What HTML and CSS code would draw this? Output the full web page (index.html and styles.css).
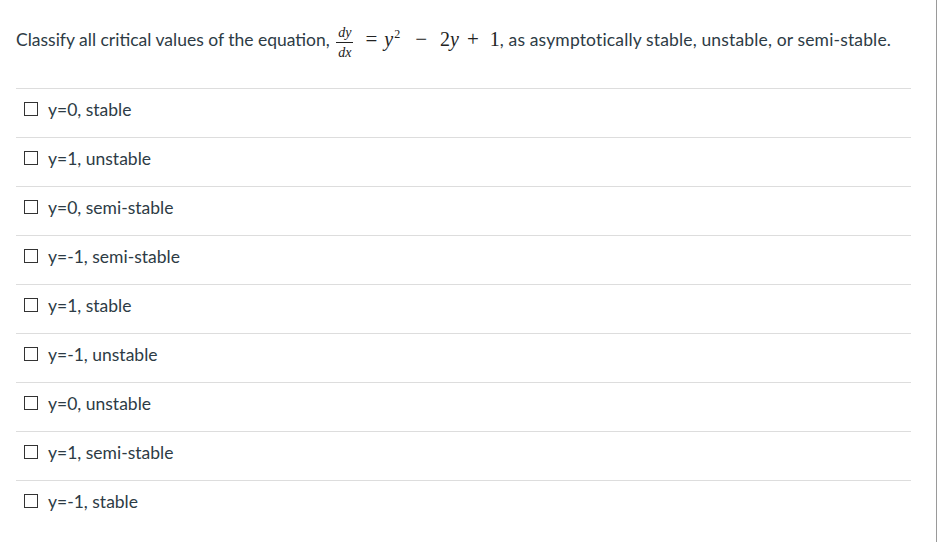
FILE: index.html
```html
<!DOCTYPE html>
<html lang="en">
<head>
  <meta charset="UTF-8" />
  <title>Question</title>
  <link rel="stylesheet" href="styles.css">
</head>
<body>
  <div class="page">
    <div class="question">
      <p class="question-text">Classify all critical values of the equation, <span class="math"><span class="frac"><span class="num">dy</span><span class="den">dx</span></span><span class="op eq">=</span><span class="var">y<sup>2</sup></span><span class="op minus">−</span><span class="num-ital">2<i>y</i></span><span class="op plus">+</span><span class="digit">1</span></span><span class="tail">, as asymptotically stable, unstable, or semi-stable.</span></p>

      <ul class="answers">
        <li class="answer"><span class="box"></span><span class="label">y=0, stable</span></li>
        <li class="answer"><span class="box"></span><span class="label">y=1, unstable</span></li>
        <li class="answer"><span class="box"></span><span class="label">y=0, semi-stable</span></li>
        <li class="answer"><span class="box"></span><span class="label">y=-1, semi-stable</span></li>
        <li class="answer"><span class="box"></span><span class="label">y=1, stable</span></li>
        <li class="answer"><span class="box"></span><span class="label">y=-1, unstable</span></li>
        <li class="answer"><span class="box"></span><span class="label">y=0, unstable</span></li>
        <li class="answer"><span class="box"></span><span class="label">y=1, semi-stable</span></li>
        <li class="answer"><span class="box"></span><span class="label">y=-1, stable</span></li>
      </ul>
    </div>
  </div>
</body>
</html>
```

FILE: styles.css
```css
body {
  margin: 0;
  background: #fff;
  font-family: Lato, "Liberation Sans", sans-serif;
  color: #2d3b45;
}

.page {
  width: 936px;
  min-height: 542px;
  border-right: 1px solid #9a9a9a;
}

.question {
  padding: 0 25px 0 16px;
}

.question-text {
  margin: 0;
  padding: 26px 0 0 0;
  height: 88px;
  box-sizing: border-box;
  font-size: 17.5px;
  line-height: 26px;
}

.tail {
  letter-spacing: 0.15px;
}

.math {
  font-family: "Liberation Serif", serif;
  font-size: 20px;
  color: #222;
  margin-left: 2px;
}

.frac {
  display: inline-flex;
  flex-direction: column;
  align-items: center;
  vertical-align: 9px;
  font-style: italic;
  font-size: 14px;
  line-height: 12px;
  margin-right: 12px;
}

.frac .num {
  padding: 0 2px 3px;
  border-bottom: 1px solid #222;
}

.frac .den {
  padding-top: 4px;
}

.op {
  display: inline-block;
  font-size: 21px;
  line-height: 1;
}

.eq {
  margin-right: 7px;
}

.minus {
  margin: 0 13px 0 15px;
}

.plus {
  margin: 0 11px 0 8px;
}

.var {
  font-style: italic;
}

.var sup {
  font-style: normal;
  font-size: 12px;
  vertical-align: 8px;
  line-height: 0;
  margin-left: 1px;
}

.num-ital i {
  font-style: italic;
}

.answers {
  list-style: none;
  margin: 0;
  padding: 0;
}

.answer {
  display: flex;
  align-items: center;
  gap: 10px;
  height: 48px;
  box-sizing: content-box;
  padding-left: 8px;
  border-top: 1px solid #dddddd;
  font-size: 17.5px;
}

.box {
  box-sizing: border-box;
  width: 14px;
  height: 14px;
  border: 1.5px solid #333;
  margin-bottom: 8px;
}

.label {
  margin-bottom: 7px;
}
```
